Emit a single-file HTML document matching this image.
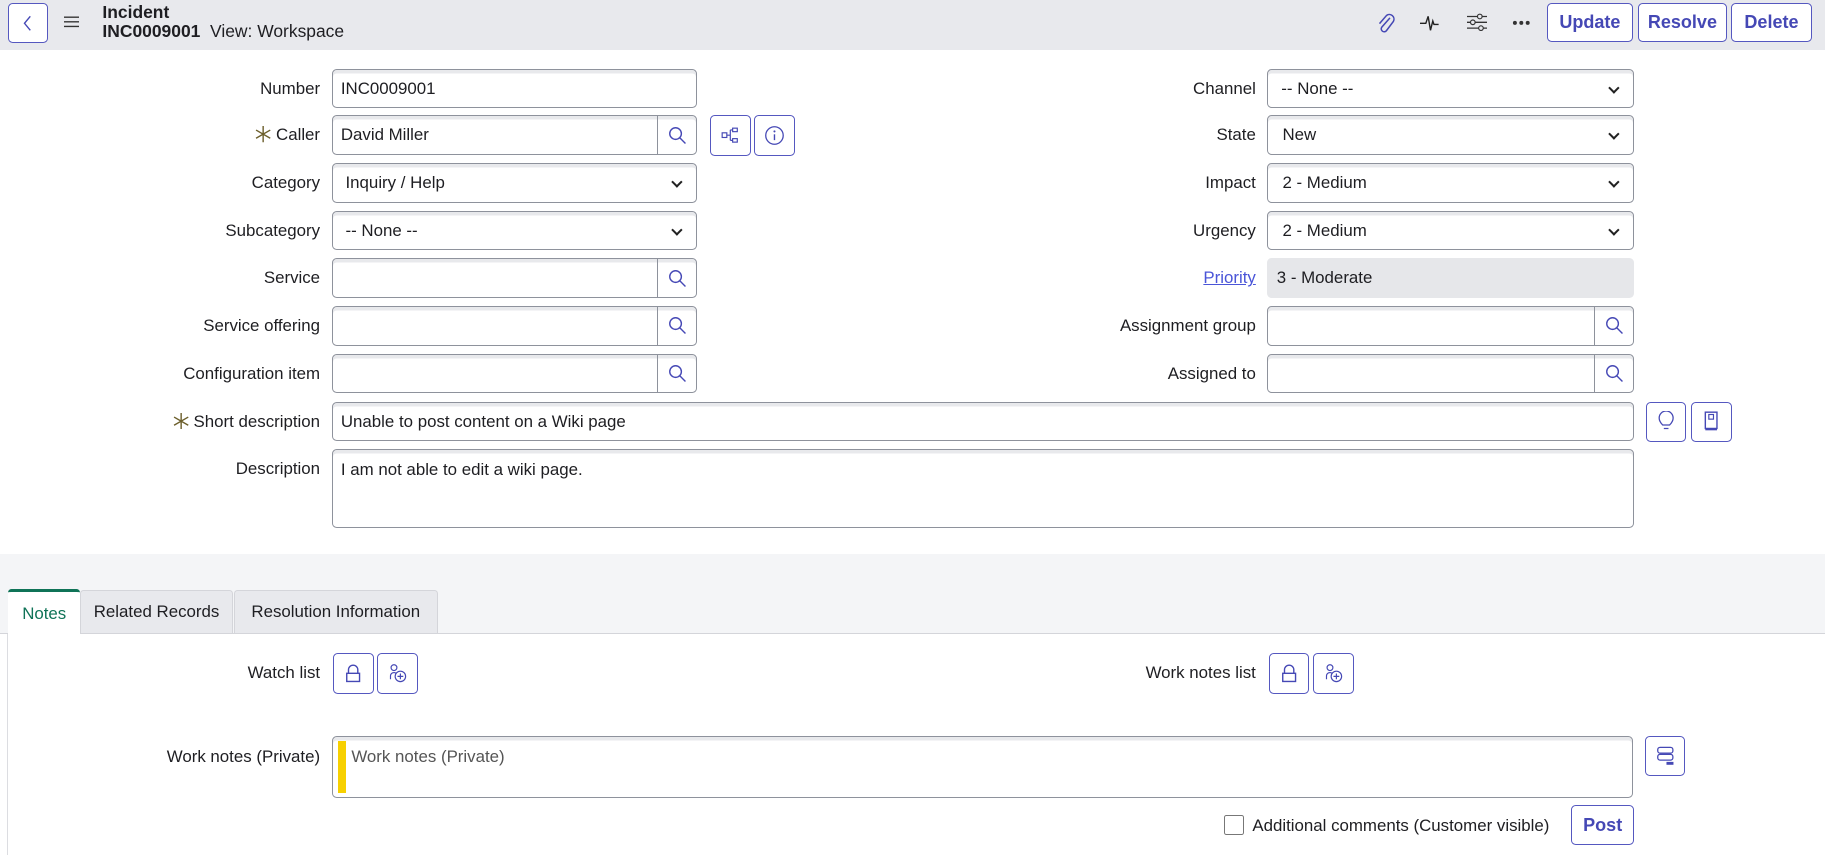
<!DOCTYPE html>
<html><head><meta charset="utf-8">
<style>
*{box-sizing:border-box;margin:0;padding:0}
html,body{width:1825px;height:855px;overflow:hidden;background:#fff}
#root{zoom:1.1639;width:1568px;height:735px;position:relative;font-family:"Liberation Sans",sans-serif;font-size:14.5px;color:#1e1e22;background:#fff}
.a{position:absolute}
.hdr{left:0;top:0;width:1568px;height:43px;background:#e8e9ed}
.btn{position:absolute;border:1px solid #5558c0;border-radius:4px;background:#fff;display:flex;align-items:center;justify-content:center;color:#4548b5}
.tb{height:33px;top:3px;font-weight:bold;font-size:15.5px}
.lbl{position:absolute;text-align:right;white-space:nowrap;line-height:34px;height:34px}
.inp{position:absolute;height:34px;border:1px solid #8e929c;border-radius:4px;background:#fff;box-shadow:inset 0 3px 0 #e8e9ec;line-height:32px;padding-left:7px;white-space:nowrap}
.sel::after{content:"";position:absolute;right:13px;top:12px;width:5px;height:5px;border-right:2px solid #222;border-bottom:2px solid #222;transform:rotate(45deg)}
.srch{position:absolute;right:0;top:-1px;width:34px;height:34px;border-left:1px solid #8e929c;display:flex;align-items:center;justify-content:center}
.ib{width:35px;height:35px}
.ast{display:inline-block;vertical-align:-2px;margin-right:4px}
</style></head><body><div id="root">
<div class="a hdr"></div>
<div class="btn" style="left:7px;top:3px;width:34px;height:34px"><svg width="12" height="16" viewBox="0 0 12 16"><path d="M8 2 L3 8 L8 14" fill="none" stroke="#4548b5" stroke-width="1.2"/></svg></div>
<svg class="a" style="left:55px;top:14px" width="13" height="10"><path d="M0 1h13M0 5h13M0 9h13" stroke="#333" stroke-width="1.2"/></svg>
<div class="a" style="left:88px;top:2px;font-weight:bold;font-size:15px">Incident</div>
<div class="a" style="left:88px;top:18px;font-size:15px"><b>INC0009001</b>&nbsp; View: Workspace</div>
<svg class="a" style="left:1182px;top:10px" width="18" height="20" viewBox="0 0 18 20"><path d="M12 5 L5 13 a2.5 2.5 0 0 0 4 3 L15 8 a4 4 0 0 0 -6 -5 L3 10" fill="none" stroke="#4548b5" stroke-width="1.3"/></svg>
<svg class="a" style="left:1220px;top:12px" width="18" height="16"><path d="M0 8h5l2-6 2 12 2-8 1 3h4" fill="none" stroke="#222" stroke-width="1.2"/></svg>
<svg class="a" style="left:1260px;top:11px" width="18" height="16"><path d="M0 3h18M0 8h18M0 13h18" stroke="#333" stroke-width="1.1"/><circle cx="11" cy="3" r="2" fill="#e8e9ed" stroke="#333"/><circle cx="5" cy="8" r="2" fill="#e8e9ed" stroke="#333"/><circle cx="12" cy="13" r="2" fill="#e8e9ed" stroke="#333"/></svg>
<svg class="a" style="left:1299px;top:17px" width="16" height="5"><circle cx="2.5" cy="2.5" r="1.7" fill="#333"/><circle cx="8" cy="2.5" r="1.7" fill="#333"/><circle cx="13.5" cy="2.5" r="1.7" fill="#333"/></svg>
<div class="btn tb" style="left:1329px;width:74px">Update</div>
<div class="btn tb" style="left:1407px;width:77px">Resolve</div>
<div class="btn tb" style="left:1487px;width:70px">Delete</div>

<!-- left column -->
<div class="lbl" style="left:0;width:275px;top:59px">Number</div>
<div class="inp" style="left:285px;top:59px;width:314px">INC0009001</div>
<div class="lbl" style="left:0;width:275px;top:99px"><svg class="ast" width="14" height="14"><path d="M7 0v14M0.9 3.5l12.2 7M0.9 10.5l12.2-7" stroke="#6b5e2a" stroke-width="1.2"/></svg>Caller</div>
<div class="inp" style="left:285px;top:99px;width:314px">David Miller<div class="srch"><svg width="16" height="16"><circle cx="6.5" cy="6.5" r="5" fill="none" stroke="#4548b5" stroke-width="1.2"/><path d="M10 10l5 5" stroke="#4548b5" stroke-width="1.2"/></svg></div></div>
<div class="btn ib" style="left:610px;top:99px"><svg width="16" height="14"><rect x="1" y="5" width="4" height="4" fill="none" stroke="#4548b5"/><rect x="10" y="1" width="4" height="3" fill="none" stroke="#4548b5"/><rect x="10" y="10" width="4" height="3" fill="none" stroke="#4548b5"/><path d="M5 7h3M8 2.5v9M8 2.5h2M8 11.5h2" stroke="#4548b5" fill="none"/></svg></div>
<div class="btn ib" style="left:648px;top:99px"><svg width="18" height="18"><circle cx="9" cy="9" r="7.5" fill="none" stroke="#4548b5" stroke-width="1.1"/><path d="M9 8v5" stroke="#4548b5" stroke-width="1.2"/><circle cx="9" cy="5.5" r="0.9" fill="#4548b5"/></svg></div>
<div class="lbl" style="left:0;width:275px;top:140px">Category</div>
<div class="inp sel" style="left:285px;top:140px;width:314px;padding-left:11px">Inquiry / Help</div>
<div class="lbl" style="left:0;width:275px;top:181px">Subcategory</div>
<div class="inp sel" style="left:285px;top:181px;width:314px;padding-left:11px">-- None --</div>
<div class="lbl" style="left:0;width:275px;top:222px">Service</div>
<div class="inp" style="left:285px;top:222px;width:314px"><div class="srch"><svg width="16" height="16"><circle cx="6.5" cy="6.5" r="5" fill="none" stroke="#4548b5" stroke-width="1.2"/><path d="M10 10l5 5" stroke="#4548b5" stroke-width="1.2"/></svg></div></div>
<div class="lbl" style="left:0;width:275px;top:263px">Service offering</div>
<div class="inp" style="left:285px;top:263px;width:314px"><div class="srch"><svg width="16" height="16"><circle cx="6.5" cy="6.5" r="5" fill="none" stroke="#4548b5" stroke-width="1.2"/><path d="M10 10l5 5" stroke="#4548b5" stroke-width="1.2"/></svg></div></div>
<div class="lbl" style="left:0;width:275px;top:304px">Configuration item</div>
<div class="inp" style="left:285px;top:304px;width:314px"><div class="srch"><svg width="16" height="16"><circle cx="6.5" cy="6.5" r="5" fill="none" stroke="#4548b5" stroke-width="1.2"/><path d="M10 10l5 5" stroke="#4548b5" stroke-width="1.2"/></svg></div></div>
<div class="lbl" style="left:0;width:275px;top:345px"><svg class="ast" width="14" height="14"><path d="M7 0v14M0.9 3.5l12.2 7M0.9 10.5l12.2-7" stroke="#6b5e2a" stroke-width="1.2"/></svg>Short description</div>
<div class="inp" style="left:285px;top:345px;width:1119px">Unable to post content on a Wiki page</div>
<div class="btn ib" style="left:1414px;top:345px"><svg width="14" height="18"><path d="M4 12 C1 9 1 7 1 6 a6 6 0 0 1 12 0 c0 1 0 3-3 6z M5 15h4" fill="none" stroke="#4548b5" stroke-width="1.1"/></svg></div>
<div class="btn ib" style="left:1453px;top:345px"><svg width="14" height="18"><rect x="2" y="1" width="10" height="14" fill="none" stroke="#4548b5" stroke-width="1.2"/><rect x="5" y="3" width="4" height="4" fill="none" stroke="#4548b5"/><path d="M2 16h10" stroke="#4548b5" stroke-width="1.2"/></svg></div>
<div class="lbl" style="left:0;width:275px;top:386px">Description</div>
<div class="inp" style="left:285px;top:386px;width:1119px;height:68px;line-height:34px">I am not able to edit a wiki page.</div>

<!-- right column -->
<div class="lbl" style="left:800px;width:279px;top:59px">Channel</div>
<div class="inp sel" style="left:1089px;top:59px;width:315px;padding-left:11px">-- None --</div>
<div class="lbl" style="left:800px;width:279px;top:99px">State</div>
<div class="inp sel" style="left:1089px;top:99px;width:315px;padding-left:12px">New</div>
<div class="lbl" style="left:800px;width:279px;top:140px">Impact</div>
<div class="inp sel" style="left:1089px;top:140px;width:315px;padding-left:12px">2 - Medium</div>
<div class="lbl" style="left:800px;width:279px;top:181px">Urgency</div>
<div class="inp sel" style="left:1089px;top:181px;width:315px;padding-left:12px">2 - Medium</div>
<div class="lbl" style="left:800px;width:279px;top:222px"><span style="color:#4a55d8;text-decoration:underline">Priority</span></div>
<div class="a" style="left:1089px;top:222px;width:315px;height:34px;background:#e6e7ea;border-radius:4px;line-height:34px;padding-left:8px">3 - Moderate</div>
<div class="lbl" style="left:800px;width:279px;top:263px">Assignment group</div>
<div class="inp" style="left:1089px;top:263px;width:315px"><div class="srch"><svg width="16" height="16"><circle cx="6.5" cy="6.5" r="5" fill="none" stroke="#4548b5" stroke-width="1.2"/><path d="M10 10l5 5" stroke="#4548b5" stroke-width="1.2"/></svg></div></div>
<div class="lbl" style="left:800px;width:279px;top:304px">Assigned to</div>
<div class="inp" style="left:1089px;top:304px;width:315px"><div class="srch"><svg width="16" height="16"><circle cx="6.5" cy="6.5" r="5" fill="none" stroke="#4548b5" stroke-width="1.2"/><path d="M10 10l5 5" stroke="#4548b5" stroke-width="1.2"/></svg></div></div>

<!-- tabs band -->
<div class="a" style="left:0;top:476px;width:1568px;height:69px;background:#f4f5f7;border-bottom:1px solid #d4d5da"></div>
<div class="a" style="left:6px;top:545px;width:1px;height:190px;background:#dcdde1"></div>
<div class="a" style="left:7px;top:506px;width:62px;height:40px;background:#fff;border-top:3px solid #0f7357;border-radius:3px 3px 0 0;color:#0f7357;text-align:center;line-height:38px">Notes</div>
<div class="a" style="left:69px;top:507px;width:131px;height:38px;background:#e8e9ed;border:1px solid #d4d5da;border-radius:3px 3px 0 0;text-align:center;line-height:36px">Related Records</div>
<div class="a" style="left:201px;top:507px;width:175px;height:38px;background:#e8e9ed;border:1px solid #d4d5da;border-radius:3px 3px 0 0;text-align:center;line-height:36px">Resolution Information</div>

<div class="lbl" style="left:0;width:275px;top:561px">Watch list</div>
<div class="btn ib" style="left:286px;top:561px"><svg width="14" height="16"><path d="M3 8V5a4 4 0 0 1 8 0v3" fill="none" stroke="#4548b5" stroke-width="1.2"/><rect x="1.5" y="8" width="11" height="7" fill="none" stroke="#4548b5" stroke-width="1.2"/></svg></div>
<div class="btn ib" style="left:324px;top:561px"><svg width="18" height="18"><circle cx="6" cy="4" r="2.5" fill="none" stroke="#4548b5"/><path d="M3 14v-3a3 3 0 0 1 5-2" fill="none" stroke="#4548b5"/><circle cx="11.5" cy="11.5" r="4.5" fill="none" stroke="#4548b5"/><path d="M11.5 9v5M9 11.5h5" stroke="#4548b5"/></svg></div>
<div class="lbl" style="left:800px;width:279px;top:561px">Work notes list</div>
<div class="btn ib" style="left:1090px;top:561px"><svg width="14" height="16"><path d="M3 8V5a4 4 0 0 1 8 0v3" fill="none" stroke="#4548b5" stroke-width="1.2"/><rect x="1.5" y="8" width="11" height="7" fill="none" stroke="#4548b5" stroke-width="1.2"/></svg></div>
<div class="btn ib" style="left:1128px;top:561px"><svg width="18" height="18"><circle cx="6" cy="4" r="2.5" fill="none" stroke="#4548b5"/><path d="M3 14v-3a3 3 0 0 1 5-2" fill="none" stroke="#4548b5"/><circle cx="11.5" cy="11.5" r="4.5" fill="none" stroke="#4548b5"/><path d="M11.5 9v5M9 11.5h5" stroke="#4548b5"/></svg></div>

<div class="lbl" style="left:0;width:275px;top:633px">Work notes (Private)</div>
<div class="inp" style="left:285px;top:632px;width:1118px;height:54px;padding-left:16px;color:#555;line-height:34px">Work notes (Private)</div>
<div class="a" style="left:290px;top:637px;width:7px;height:44px;background:#f7d000"></div>
<div class="btn ib" style="left:1413px;top:632px"><svg width="16" height="18"><rect x="1.5" y="2" width="13" height="5" rx="2" fill="none" stroke="#4548b5" stroke-width="1.1"/><rect x="1.5" y="8" width="13" height="5" rx="2" fill="none" stroke="#4548b5" stroke-width="1.1"/><rect x="9" y="14.5" width="6" height="2.5" fill="#4548b5"/></svg></div>
<div class="a" style="left:1052px;top:700px;width:17px;height:17px;border:1px solid #777;border-radius:2px;background:#fff"></div>
<div class="a" style="left:1076px;top:699px;line-height:20px">Additional comments (Customer visible)</div>
<div class="btn" style="left:1350px;top:692px;width:54px;height:34px;font-weight:bold;font-size:15.5px">Post</div>
</div></body></html>
